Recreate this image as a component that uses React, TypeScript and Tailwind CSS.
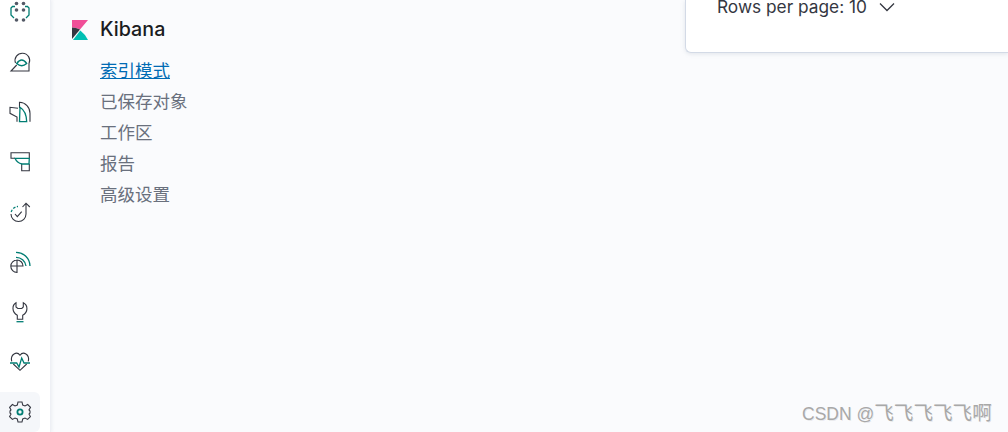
const dark = "#343741";
const teal = "#017d73";

function Icon({ children }: { children: React.ReactNode }) {
  return (
    <svg width="24" height="24" viewBox="0 0 24 24" fill="none" stroke={dark} strokeWidth="1.1">
      {children}
    </svg>
  );
}

const icons = [
  <Icon key="a">
    <g fill="#535966" stroke="none">
      <circle cx="8.500" cy="3.500" r="1.800" /><circle cx="15.500" cy="3.500" r="1.800" />
      <circle cx="8.500" cy="10" r="1.800" /><circle cx="15.500" cy="10" r="1.800" />
      <circle cx="8.500" cy="20" r="1.800" /><circle cx="15.500" cy="20" r="1.800" />
    </g>
    <path d="M7 6.500H4.500L3 8v7l3 3M17 6.500h2.500L21 8v7l-3 3" stroke={teal} strokeWidth="1.300" />
  </Icon>,
  <Icon key="b">
    <path d="M8.700 15L3 21h18v-7.500a7.300 7.300 0 1 0-13.500-.5" />
    <path d="M8.700 13.500Q13.700 6.500 18.700 13.500Q13.700 18 8.700 13.500Z" stroke={teal} strokeWidth="1.300" />
  </Icon>,
  <Icon key="c">
    <path d="M11.500 8V2.300c6 .2 10.500 5 10.500 11v8.400M10 8.300L2 7.300v6l7 3.700v4.700" />
    <path d="M12 7.300c4 2.500 6.500 8 6.700 14.400H11.500Z" stroke={teal} strokeWidth="1.300" />
  </Icon>,
  <Icon key="d">
    <path d="M7 8.300H3V2.700h18.300v5.600M13.700 14v6.700h7.600v-7" />
    <path d="M7 8.300h14.300L21 14h-7q-5-1-7-5.700Z" stroke={teal} strokeWidth="1.300" />
  </Icon>,
  <Icon key="e">
    <path d="M3.200 12A7.500 7.500 0 0 1 10 6.500" stroke={teal} strokeWidth="1.300" strokeDasharray="2.500 1.500" />
    <path d="M3 14a7.500 7.500 0 0 0 15 0V3.200M14.500 7L18 3.200 21.800 7" />
    <path d="M7 14l2.300 2.700 4.400-5" />
  </Icon>,
  <Icon key="f">
    <path d="M9 10a6 6 0 0 1 6 6H9ZM9 10a6.200 6.200 0 1 0 0 12.400V16H3" />
    <path d="M8 2.300A14 14 0 0 1 22 16M8 7.300A10 10 0 0 1 18 16" stroke={teal} strokeWidth="1.300" />
  </Icon>,
  <Icon key="g">
    <path d="M8 2.700C4 5 3.500 12 9.300 15.300v4h5.400v-4C20.500 12 20 5 15.300 2.700V7l-1.500 1.500h-4L8 7Z" />
    <path d="M8.500 21.700h7" stroke={teal} strokeWidth="1.300" />
  </Icon>,
  <Icon key="h">
    <path d="M3.700 11.300C2 4 9 1 12 5.300c3-4.300 10-1.300 8.300 6M5.300 14L12 20.300 18.700 14" />
    <path d="M2 13h6.700l2.300 4 2.700-9L16 13h6" stroke={teal} strokeWidth="1.300" />
  </Icon>,
  <Icon key="i">
    <path d="M10 2h4l.7 3 2.300 1 2.700-1.500 2.800 2.800L21 10l1 1v2l-1 1 1.400 2.600-2.800 2.800-2.600-1.400-2.300 1L14 22h-4l-.7-3-2.300-1-2.600 1.400-2.800-2.800L3 14l-1-1v-2l1-1-1.400-2.700 2.800-2.800L7 6l2.300-1Z" />
    <circle cx="12" cy="12" r="2.600" stroke={teal} strokeWidth="1.800" />
  </Icon>,
];

const links = ["已保存对象", "工作区", "报告", "高级设置"];

export default function App() {
  return (
    <div className="relative flex h-[432px] overflow-hidden bg-[#fafbfd] font-['Inter','Noto_Sans_CJK_SC',sans-serif]">
      <aside className="w-[51px] shrink-0 border-r border-[#eef0f5] bg-white shadow-[1px_0_3px_rgba(152,162,179,0.15)]">
        <div className="-mt-[13px] flex flex-col">
          {icons.map((icon, i) => (
            <div key={i} className="flex h-[50px] items-center">
              <div className={`flex h-10 w-10 items-center justify-center rounded-r-md ${i === 8 ? "bg-[#f5f7fa]" : ""}`}>
                {icon}
              </div>
            </div>
          ))}
        </div>
      </aside>

      <main className="flex min-w-0 flex-1 justify-between">
        <div className="pl-[21px] pt-[20px]">
          <div className="flex h-[20px] items-center gap-[12px]">
            <svg width="16" height="20" viewBox="0 0 16 20">
              <path d="M0 0H16L8 9.500Q4 7.500 0 7.500Z" fill="#f04e98" />
              <path d="M0 7.500Q4 7.500 8 9.500L0 19Z" fill="#343741" />
              <path d="M1 20L8.300 10.500Q13 14 16 20Z" fill="#00bfb3" />
            </svg>
            <span className="text-[19.700px] font-medium text-[#1a1c21]">Kibana</span>
          </div>
          <div className="mt-[15px] pl-[28px] text-[17.500px] leading-[31px] text-[#69707d]">
            <a className="block text-[#006bb4] underline">索引模式</a>
            {links.map((link) => (
              <a key={link} className="block">{link}</a>
            ))}
          </div>
        </div>

        <div className="h-[53px] w-[323px] rounded-bl-md border-b border-l border-[#d3dae6] bg-white pl-[31px] shadow-[0_1px_4px_rgba(152,162,179,0.25)]">
          <div className="flex h-[14px] items-center gap-[12px] text-[17.300px] leading-[14px] text-[#343741]">
            <span>Rows per page: 10</span>
            <svg width="16" height="16" viewBox="0 0 16 16" fill="none" stroke="#343741" strokeWidth="1.300">
              <path d="M1 4.500l7 7 7-7" />
            </svg>
          </div>
        </div>
      </main>

      <span className="absolute left-[802px] top-[399px] font-['Liberation_Sans','Noto_Sans_CJK_SC',sans-serif] text-[17.500px] leading-[28px] text-[#a8a8a8] [text-shadow:1px_1px_0_rgba(0,0,0,0.08)]">
        CSDN @<span className="text-[19.600px]">飞飞飞飞飞啊</span>
      </span>
    </div>
  );
}
